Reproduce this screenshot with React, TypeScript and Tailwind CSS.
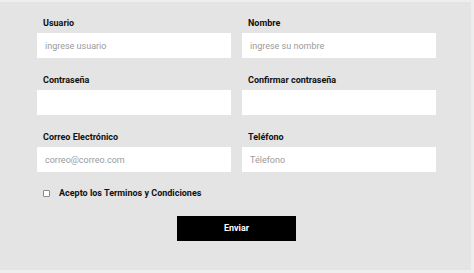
const fields = [
  { label: "Usuario", placeholder: "ingrese usuario" },
  { label: "Nombre", placeholder: "ingrese su nombre" },
  { label: "Contraseña", placeholder: "" },
  { label: "Confirmar contraseña", placeholder: "" },
  { label: "Correo Electrónico", placeholder: "correo@correo.com" },
  { label: "Teléfono", placeholder: "Télefono" },
];

export default function App() {
  return (
    <div
      className="w-[474px] h-[273px] bg-[#eeeeee] overflow-hidden"
      style={{ fontFamily: "Roboto, 'Liberation Sans', sans-serif" }}
    >
      <div className="w-[471px] h-[268px] mt-[2px] bg-[#e4e4e4] pt-[15px] pl-[37px]">
        {/* Fields */}
        <div className="grid grid-cols-[194px_194px] gap-x-[11px] gap-y-[16px]">
          {fields.map((f) => (
            <div key={f.label} className="flex flex-col">
              <label className="h-[12px] mb-[4px] pl-[6px] text-[9px] leading-[12px] font-bold text-[#111]">
                {f.label}
              </label>
              <input
                className="h-[25px] w-full bg-white px-[8px] text-[9px] text-[#333] placeholder:text-[#9a9a9a] outline-none"
                placeholder={f.placeholder}
              />
            </div>
          ))}
        </div>

        {/* Terms */}
        <div className="flex items-center mt-[15px] pl-[6px] h-[12px]">
          <span className="w-[7px] h-[7px] border border-[#8a8a8a] bg-white rounded-[1px]" />
          <span className="ml-[9px] text-[9px] leading-[12px] font-bold text-[#111]">
            Acepto los Terminos y Condiciones
          </span>
        </div>

        {/* Submit */}
        <div className="w-[399px] flex justify-center mt-[17px]">
          <button className="w-[119px] h-[25px] bg-black text-white text-[9px] font-bold">
            Enviar
          </button>
        </div>
      </div>
    </div>
  );
}
